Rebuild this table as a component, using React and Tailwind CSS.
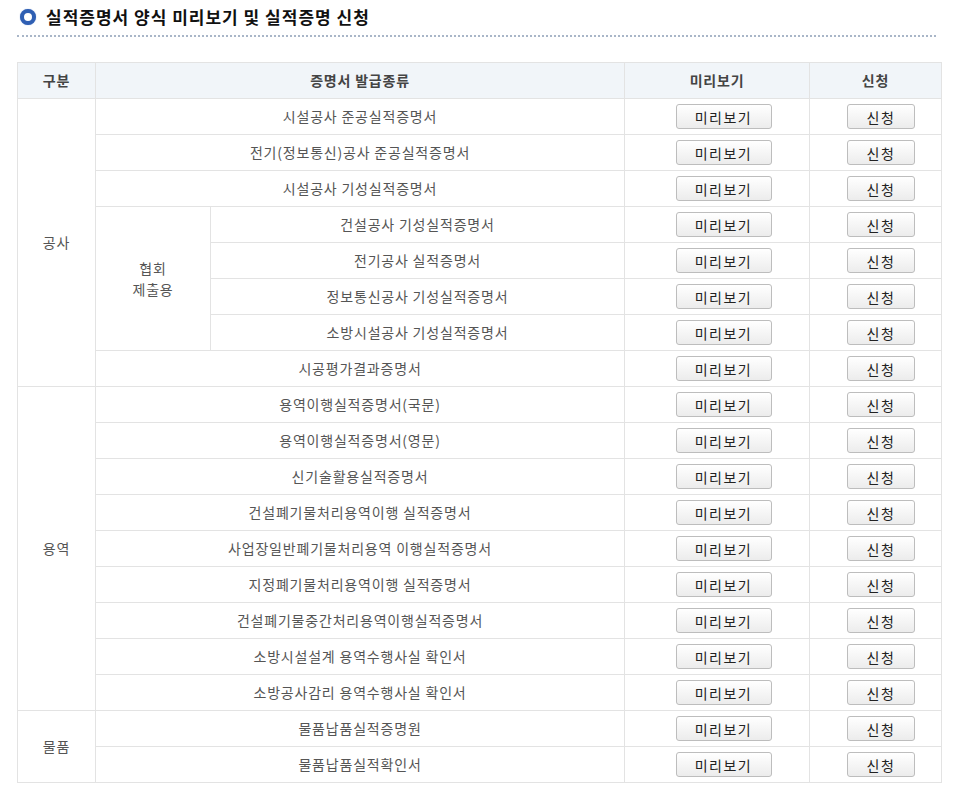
import React from "react";

const font = { fontFamily: '"Noto Sans CJK KR", "Noto Sans", sans-serif' };

function Btn({ label, w }) {
  return (
    <button
      className={`${w} h-[25px] rounded-[3px] border border-[#bdbdbd] bg-gradient-to-b from-white to-[#ececec] text-[14px] leading-none text-[#222] tracking-[1.5px]`}
      style={font}
    >
      {label}
    </button>
  );
}

const td = "border border-[#e3e3e3] h-[36px] text-center text-[14px] text-[#555] p-0 tracking-[0.8px]";

function Actions() {
  return (
    <>
      <td className={td}>
        <div className="flex justify-center pl-[13px]">
          <Btn label="미리보기" w="w-[96px]" />
        </div>
      </td>
      <td className={td}>
        <div className="flex justify-center pl-[11px]">
          <Btn label="신청" w="w-[68px]" />
        </div>
      </td>
    </>
  );
}

const gongsaTop = ["시설공사 준공실적증명서", "전기(정보통신)공사 준공실적증명서", "시설공사 기성실적증명서"];
const hyeophoe = ["건설공사 기성실적증명서", "전기공사 실적증명서", "정보통신공사 기성실적증명서", "소방시설공사 기성실적증명서"];
const yongyeok = [
  "용역이행실적증명서(국문)",
  "용역이행실적증명서(영문)",
  "신기술활용실적증명서",
  "건설폐기물처리용역이행 실적증명서",
  "사업장일반폐기물처리용역 이행실적증명서",
  "지정폐기물처리용역이행 실적증명서",
  "건설폐기물중간처리용역이행실적증명서",
  "소방시설설계 용역수행사실 확인서",
  "소방공사감리 용역수행사실 확인서",
];
const mulpum = ["물품납품실적증명원", "물품납품실적확인서"];

const th = "border border-[#e3e3e3] text-[14px] font-bold text-[#444] tracking-[0.8px]";

export default function App() {
  return (
    <div className="w-[953px] h-[788px] bg-white px-[17px] pt-[5px]" style={font}>
      <div className="flex items-center h-[24px]">
        <span className="ml-[3px] w-[16px] h-[16px] rounded-full border-[4px] border-[#2f5fb3] bg-white shadow-[0_0_1px_#6a8fd0]" />
        <h2 className="ml-[10px] text-[17px] font-bold text-[#111] tracking-[1px]">
          실적증명서 양식 미리보기 및 실적증명 신청
        </h2>
      </div>
      <div className="mt-[6px] border-t-2 border-dotted border-[#a9b6c8]" />
      <table className="mt-[25px] w-[924px] border-collapse table-fixed">
        <colgroup>
          <col className="w-[78px]" />
          <col className="w-[115px]" />
          <col className="w-[414px]" />
          <col className="w-[185px]" />
          <col className="w-[132px]" />
        </colgroup>
        <thead>
          <tr className="bg-[#f1f5f9]">
            <th className={`${th} h-[36px]`}>구분</th>
            <th colSpan={2} className={th}>증명서 발급종류</th>
            <th className={th}>미리보기</th>
            <th className={th}>신청</th>
          </tr>
        </thead>
        <tbody>
          {gongsaTop.map((t, i) => (
            <tr key={t}>
              {i === 0 && (
                <td rowSpan={8} className={td}>공사</td>
              )}
              <td colSpan={2} className={td}>{t}</td>
              <Actions />
            </tr>
          ))}
          {hyeophoe.map((t, i) => (
            <tr key={t}>
              {i === 0 && (
                <td rowSpan={4} className={`${td} leading-[21px]`}>
                  협회
                  <br />
                  제출용
                </td>
              )}
              <td className={td}>{t}</td>
              <Actions />
            </tr>
          ))}
          <tr>
            <td colSpan={2} className={td}>시공평가결과증명서</td>
            <Actions />
          </tr>
          {yongyeok.map((t, i) => (
            <tr key={t}>
              {i === 0 && (
                <td rowSpan={9} className={td}>용역</td>
              )}
              <td colSpan={2} className={td}>{t}</td>
              <Actions />
            </tr>
          ))}
          {mulpum.map((t, i) => (
            <tr key={t}>
              {i === 0 && (
                <td rowSpan={2} className={td}>물품</td>
              )}
              <td colSpan={2} className={td}>{t}</td>
              <Actions />
            </tr>
          ))}
        </tbody>
      </table>
    </div>
  );
}
